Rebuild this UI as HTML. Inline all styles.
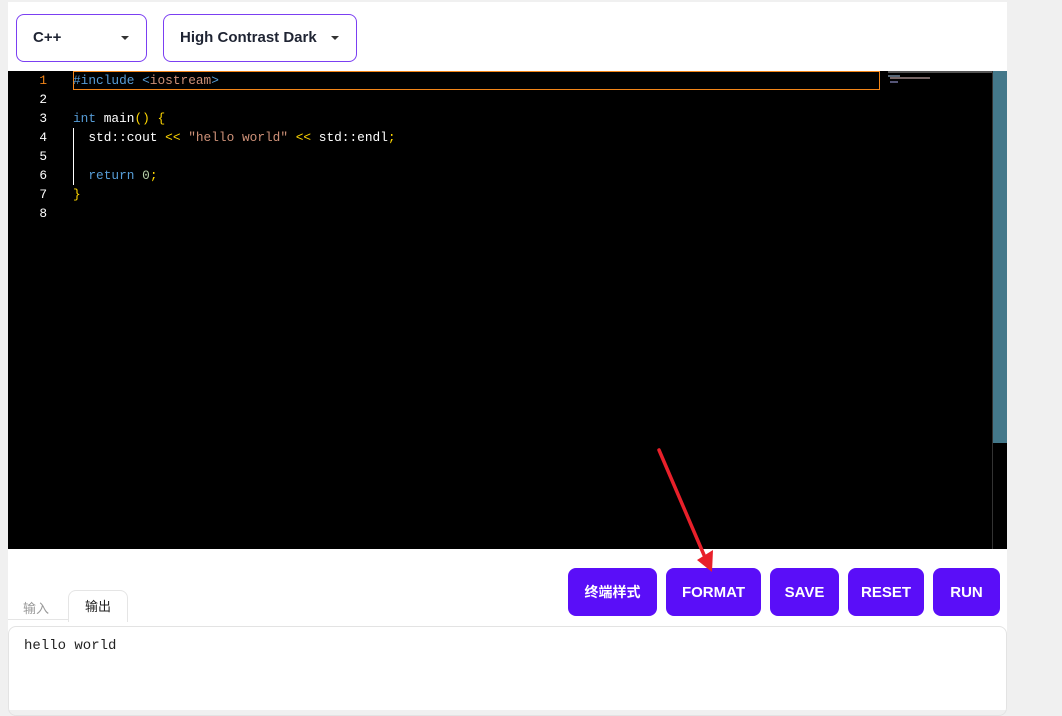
<!DOCTYPE html>
<html><head><meta charset="utf-8"><style>
*{box-sizing:border-box;margin:0;padding:0}
body{width:1062px;height:710px;background:#f0f0f0;position:relative;overflow:hidden;font-family:"Liberation Sans","Noto Sans CJK SC",sans-serif}
.main{position:absolute;left:8px;top:2px;width:999px;height:708px;background:#fff}
.sel{position:absolute;top:12px;height:48px;border:1.5px solid #7b3ff2;border-radius:8px;font-weight:bold;font-size:15px;color:#1f2433;line-height:45px;padding-left:16px}
.sel i{position:absolute;top:21px;width:0;height:0;border-left:4px solid transparent;border-right:4px solid transparent;border-top:4px solid #333}
.ed{position:absolute;left:0;top:69px;width:999px;height:478px;background:#000;font-family:"Liberation Mono",monospace;font-size:12.8px}
.ln{position:absolute;left:0;width:39px;text-align:right;color:#fff;height:19px;line-height:19px}
.cl{position:absolute;left:65px;height:19px;line-height:19px;white-space:pre;color:#fff}
.k{color:#569cd6}.y{color:#ffd700}.s{color:#ce9178}.n{color:#b5cea8}
.btn{position:absolute;top:566px;height:48px;background:#5a0ef8;color:#fff;border-radius:8px;font-weight:bold;font-size:15px;text-align:center;line-height:49px}
.mm{position:absolute;height:2px}
</style></head><body>
<div class="main">
<div class="sel" style="left:8px;width:131px">C++<i style="left:104px"></i></div>
<div class="sel" style="left:155px;width:194px">High Contrast Dark<i style="left:167px"></i></div>
<div class="ed">
<div style="position:absolute;left:65px;top:0;width:807px;height:19px;border:1px solid #f38518"></div>
<div style="position:absolute;left:65px;top:57px;width:1px;height:57px;background:#fff"></div>
<div class="ln" style="top:0;color:#f38518">1</div><div class="ln" style="top:19px">2</div><div class="ln" style="top:38px">3</div><div class="ln" style="top:57px">4</div><div class="ln" style="top:76px">5</div><div class="ln" style="top:95px">6</div><div class="ln" style="top:114px">7</div><div class="ln" style="top:133px">8</div>
<div class="cl" style="top:0"><span class="k">#include &lt;</span><span class="s">iostream</span><span class="k">&gt;</span></div>
<div class="cl" style="top:38px"><span class="k">int</span> main<span class="y">()</span> <span class="y">{</span></div>
<div class="cl" style="top:57px">  std::cout <span class="y">&lt;&lt;</span> <span class="s">"hello world"</span> <span class="y">&lt;&lt;</span> std::endl<span class="y">;</span></div>
<div class="cl" style="top:95px">  <span class="k">return</span> <span class="n">0</span><span class="y">;</span></div>
<div class="cl" style="top:114px"><span class="y">}</span></div>
<div style="position:absolute;left:880px;top:0;width:105px;height:2px;background:#555"></div>
<div class="mm" style="left:880px;top:4px;width:12px;background:#567"></div>
<div class="mm" style="left:882px;top:6px;width:40px;background:#766"></div>
<div class="mm" style="left:882px;top:10px;width:8px;background:#557"></div>
<div style="position:absolute;left:985px;top:0;width:14px;height:372px;background:#44788a"></div>
<div style="position:absolute;left:984px;top:0;width:1px;height:478px;background:#333"></div>
</div>
<div style="position:absolute;left:0;top:617px;width:60px;height:1px;background:#e5e5e5"></div>
<div style="position:absolute;left:15px;top:596px;font-size:13px;color:#999">输入</div>
<div style="position:absolute;left:60px;top:588px;width:60px;height:32px;border:1px solid #e5e5e5;border-bottom:none;border-radius:8px 8px 0 0;background:#fff;font-size:13px;color:#222;text-align:center;line-height:32px">输出</div>
<div style="position:absolute;left:0;top:624px;width:999px;height:90px;border:1px solid #e3e3e3;border-radius:8px"></div>
<div style="position:absolute;left:16px;top:636px;font-family:'Liberation Mono',monospace;font-size:14px;color:#222">hello world</div>
<div class="btn" style="left:560px;width:89px;font-size:14px">终端样式</div>
<div class="btn" style="left:658px;width:95px">FORMAT</div>
<div class="btn" style="left:762px;width:69px">SAVE</div>
<div class="btn" style="left:840px;width:76px">RESET</div>
<div class="btn" style="left:925px;width:67px">RUN</div>
</div>
<svg style="position:absolute;left:0;top:0" width="1062" height="710"><line x1="659" y1="450" x2="704" y2="555" stroke="#e8202a" stroke-width="3.5" stroke-linecap="round"/><polygon points="697,560 712,572 713,550" fill="#e8202a"/></svg>
</body></html>
